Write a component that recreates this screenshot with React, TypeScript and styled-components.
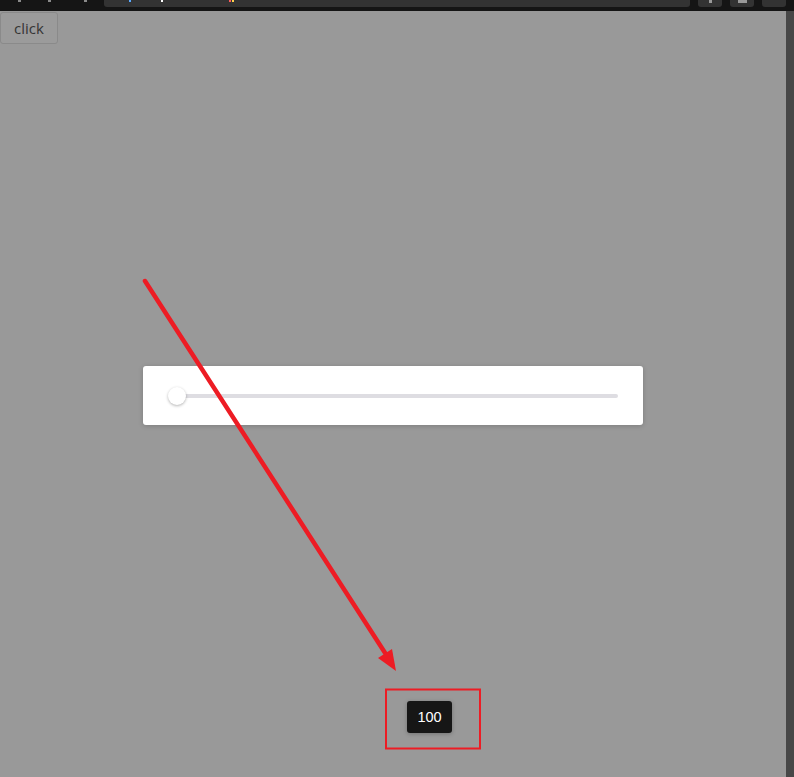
import styled, { createGlobalStyle } from 'styled-components'

const GlobalStyle = createGlobalStyle`
  html, body {
    margin: 0;
    padding: 0;
    height: 100%;
    overflow: hidden;
    background: #151515;
  }
  #root {
    height: 100%;
  }
`

const Frame = styled.div`
  position: relative;
  display: flex;
  flex-direction: column;
  width: 794px;
  height: 777px;
  font-family: 'Open Sans', 'Liberation Sans', sans-serif;
`

const Chrome = styled.div`
  display: flex;
  align-items: flex-start;
  height: 11px;
  padding-left: 104px;
  padding-right: 8px;
  gap: 8px;
  background: #151515;
`

const ChromeDot = styled.span<{ left: number }>`
  position: absolute;
  top: 0;
  left: ${({ left }) => left}px;
  width: 3px;
  height: 2px;
  background: #8a8a8a;
`

const UrlBox = styled.div`
  flex: 1;
  height: 7px;
  background: #333333;
  border-radius: 0 0 3px 3px;
  position: relative;
`

const UrlMark = styled.span<{ left: number; color: string }>`
  position: absolute;
  top: 0;
  left: ${({ left }) => left}px;
  width: 2px;
  height: 2px;
  background: ${({ color }) => color};
`

const ChromeButton = styled.div`
  width: 24px;
  height: 7px;
  background: #333333;
  border-radius: 0 0 3px 3px;
  display: flex;
  justify-content: center;
`

const ButtonGlyph = styled.span<{ w: number }>`
  width: ${({ w }) => w}px;
  height: 3px;
  background: #9a9a9a;
`

const Viewport = styled.div`
  flex: 1;
  display: flex;
`

const Page = styled.div`
  flex: 1;
  background: #999999;
  display: grid;
  grid-template-areas: 'stack';
  padding-top: 1px;
`

const ClickButton = styled.button`
  grid-area: stack;
  align-self: start;
  justify-self: start;
  height: 32px;
  padding: 0 13px;
  background: #9b9b9b;
  border: 1px solid #8a8a8a;
  border-radius: 3px;
  color: #353535;
  font-family: 'Open Sans', 'Liberation Sans', sans-serif;
  font-size: 15px;
`

const SliderCard = styled.div`
  grid-area: stack;
  align-self: center;
  justify-self: center;
  margin-top: 2px;
  width: 500px;
  height: 59px;
  box-sizing: border-box;
  padding: 0 25px 0 26px;
  background: #ffffff;
  border-radius: 3px;
  box-shadow: 0 1px 5px rgba(0, 0, 0, 0.18);
  display: flex;
  align-items: center;
`

const Track = styled.div`
  position: relative;
  flex: 1;
  height: 4px;
  background: #dedde2;
  border-radius: 2px;
  margin-left: 1px;
`

const Thumb = styled.div`
  position: absolute;
  left: -2px;
  top: 50%;
  width: 18px;
  height: 18px;
  margin-top: -9px;
  border-radius: 50%;
  background: #ffffff;
  box-shadow: 0 1px 3px rgba(0, 0, 0, 0.3);
`

const Scrollbar = styled.div`
  width: 8px;
  background: #474747;
`

const Tooltip = styled.div`
  position: absolute;
  left: 407px;
  top: 701px;
  width: 45px;
  height: 32px;
  background: #161616;
  border-radius: 3px;
  box-shadow: 0 1px 4px rgba(0, 0, 0, 0.25);
  color: #ffffff;
  font-family: 'Liberation Sans', Arial, sans-serif;
  font-size: 14.5px;
  display: flex;
  align-items: center;
  justify-content: center;
`

const Annotations = styled.svg`
  position: absolute;
  left: 0;
  top: 0;
  pointer-events: none;
`

export default function App() {
  return (
    <>
      <GlobalStyle />
      <Frame>
        <Chrome>
          <ChromeDot left={18} />
          <ChromeDot left={48} />
          <ChromeDot left={84} />
          <UrlBox>
            <UrlMark left={25} color="#5aa9ff" />
            <UrlMark left={57} color="#ffffff" />
            <UrlMark left={125} color="#ff5a5a" />
            <UrlMark left={128} color="#ffd24a" />
          </UrlBox>
          <ChromeButton>
            <ButtonGlyph w={3} />
          </ChromeButton>
          <ChromeButton>
            <ButtonGlyph w={9} />
          </ChromeButton>
          <ChromeButton />
        </Chrome>
        <Viewport>
          <Page>
            <ClickButton>click</ClickButton>
            <SliderCard>
              <Track>
                <Thumb />
              </Track>
            </SliderCard>
          </Page>
          <Scrollbar />
        </Viewport>
        <Tooltip>100</Tooltip>
        <Annotations width="794" height="777" viewBox="0 0 794 777">
          <line x1="145" y1="281" x2="389" y2="659" stroke="#ed1c24" strokeWidth="4.5" strokeLinecap="round" />
          <polygon points="396,671 378,658 392,649" fill="#ed1c24" />
          <rect x="386" y="689.5" width="94" height="59" fill="none" stroke="#ed1c24" strokeWidth="2" />
        </Annotations>
      </Frame>
    </>
  )
}
